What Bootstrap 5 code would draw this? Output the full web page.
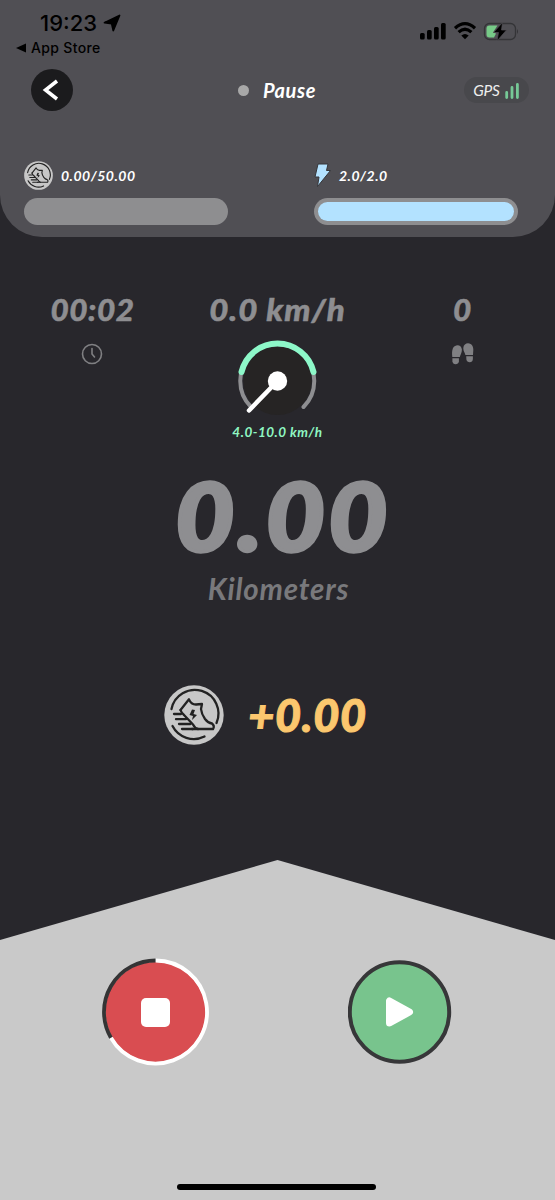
<!DOCTYPE html>
<html lang="en">
<head>
<meta charset="utf-8">
<meta name="viewport" content="width=device-width, initial-scale=1">
<title>Run – Pause</title>
<link href="https://cdn.jsdelivr.net/npm/bootstrap@5.3.0/dist/css/bootstrap.min.css" rel="stylesheet">
<style>
  body { background:#28272c; font-family:Lato,"Open Sans",sans-serif; font-style:italic; font-weight:700; color:#8e8e91; }
  .phone { width:555px; height:1200px; }
  .top-panel { height:237px; background:#504f54; border-radius:0 0 42px 42px; color:#fff; }
  .status { height:60px; font-family:Inter,sans-serif; font-style:normal; color:#000; padding:10px 36px 0 16px; }
  .clock { font-size:22px; line-height:26px; font-weight:500; padding-left:24px; gap:6px; }
  .return-link { font-size:14px; line-height:24px; font-weight:500; letter-spacing:.35px; }
  .signals { padding-top:11px; }
  .title-bar { height:60px; padding:0 26px 0 31px; }
  .back { width:42px; height:42px; background:#1b1b1d; border:0; padding-right:2px; }
  .state { font-size:20px; line-height:24px; letter-spacing:.6px; margin-left:17px; }
  .dot { width:11px; height:11px; margin-right:14px; background:#a8a8a8; }
  .gps { width:65px; height:26px; background:#48484c; font-size:15.5px; font-weight:400; letter-spacing:-.2px; color:#eee; padding-top:1px; }
  .meters { padding:40px 37px 0 24px; }
  .meter { width:204px; }
  .meter-label { height:30px; font-size:14px; letter-spacing:.5px; }
  .meter-track { height:27px; margin-top:8px; background:#8e8e90; padding:4px; }
  .meter-track .progress-bar { background:#b3e2ff; border-radius:20px; }
  .stats { height:153px; padding-top:54px; }
  .stat-value { font-size:30px; line-height:36px; font-weight:900; letter-spacing:.5px; white-space:nowrap; -webkit-text-stroke:.5px #8e8e91; transform:scaleX(1.05); }
  .stat-value.speed { letter-spacing:.9px; transform:scaleX(1.1); }
  .stat-icon { margin-top:16px; }
  .gauge { margin-top:10px; }
  .range { font-size:13.5px; line-height:18px; color:#8ff6c2; letter-spacing:.5px; }
  .distance { font-size:92.5px; line-height:100px; font-weight:900; padding-top:76px; letter-spacing:3.2px; -webkit-text-stroke:3.5px #8e8e91; }
  .distance span { display:inline-block; transform:translateX(5px) scaleX(1.1); }
  .unit { font-size:29.5px; line-height:36px; color:#79797c; margin-top:5px; padding-left:2px; letter-spacing:.8px; }
  .reward { height:60px; margin-top:78px; gap:24px; padding-right:24px; }
  .reward-value { font-size:45px; font-weight:900; line-height:58px; color:#fbc76e; letter-spacing:.7px; -webkit-text-stroke:1px #fbc76e; }
  .dock { height:340px; background:#c9c9c9; clip-path:polygon(0 80px,50% 0,100% 80px,100% 100%,0 100%); padding:98px 103px 0 101px; }
  .home { width:199px; height:6px; background:#000; margin:118px auto 0; }
  button { padding:0; }
  svg { display:block; flex:none; }
</style>
</head>
<body>
<svg width="0" height="0" class="position-absolute">
  <symbol id="coin" viewBox="0 0 60 60">
    <circle cx="30" cy="30" r="29.7" fill="#c7c7c7"/>
    <g fill="none" stroke="#222" stroke-width="2.3" stroke-linecap="round" stroke-linejoin="round">
      <path d="M7.500 24A23.700 23.700 0 1 1 52.500 38M8.500 41A24 24 0 0 0 40.500 51.500"/>
      <path d="M16.500 25L25 14.300Q27 19.500 32 19.500L38 19L37 24Q37.500 29 41 34Q44 38 48 38.500Q51 41 49 44H28"/>
      <path d="M16.500 25Q17.500 28 20 30L29 39.500Q31 43.500 34 44"/>
      <path d="M10 29H17M12 34.200H22M15 39H26.500M18 44H29"/>
    </g>
    <path d="M28 24.500L25.500 30L29 31L28 35L33 30L29.500 29L31 25Z" fill="#222"/>
  </symbol>
</svg>
<main class="phone d-flex flex-column mx-auto overflow-hidden">
  <header class="top-panel flex-shrink-0">
    <div class="status d-flex justify-content-between">
      <div>
        <div class="clock d-flex align-items-center"><span>19:23</span>
          <svg width="18" height="18" viewBox="0 0 18 18"><path d="M1.500 8.700L16.500 1.500L10.300 16.500L8.700 9.500Z" stroke="#000" stroke-width="1.800" stroke-linejoin="round"/></svg>
        </div>
        <div class="return-link d-flex align-items-center"><svg width="15" height="10" viewBox="0 0 15 10"><path d="M0 5L10 .5V9.500Z"/></svg>App Store</div>
      </div>
      <div class="signals d-flex align-items-start">
        <svg width="99" height="21" viewBox="0 0 99 21">
          <rect x="0" y="12" width="4.700" height="6.500" rx="1.500"/><rect x="7" y="9" width="4.700" height="9.500" rx="1.500"/><rect x="14" y="6" width="4.700" height="12.500" rx="1.500"/><rect x="21" y="2" width="4.700" height="16.500" rx="1.500"/>
          <g fill="none" stroke="#000" stroke-width="3.200"><path d="M35 7.200Q45 -2 55 7.200M38.600 11.200Q45 5.200 51.400 11.200"/></g><path d="M41.300 14.600Q45 11.500 48.700 14.600L45 18.300Z"/>
          <rect x="64.500" y="2.500" width="31" height="16" rx="5" fill="none" stroke="#343437" stroke-width="1.300"/>
          <path d="M69.500 4.500H77.500L73 11.500L76 12.500L74 16.500H69.500Q66.500 16.500 66.500 13.500V7.500Q66.500 4.500 69.500 4.500Z" fill="#76ca87"/>
          <path d="M82.500 1.500L73.500 11.500H78.500L77 20L86.500 9H81.500Z" stroke="#504f54" stroke-width=".7"/>
          <path d="M97 8Q99 10.500 97 13Z" fill="#343437"/>
        </svg>
      </div>
    </div>
    <div class="title-bar d-flex align-items-center justify-content-between">
      <button class="back rounded-circle d-flex align-items-center justify-content-center" aria-label="Back"><svg width="18" height="22" viewBox="0 0 18 22"><path d="M15 2L3.500 11L15 20" fill="none" stroke="#fff" stroke-width="3.500"/></svg></button>
      <div class="state d-flex align-items-center"><span class="dot rounded-circle"></span>Pause</div>
      <div class="gps rounded-pill d-flex align-items-center justify-content-center gap-1"><span>GPS</span><svg width="16" height="18" viewBox="0 0 16 18" stroke="#76c896" stroke-width="2.800" stroke-linecap="round"><path d="M2.700 10.500V15.500M8 5.500V15.500M13.400 2.500V15.500"/></svg></div>
    </div>
    <div class="meters d-flex justify-content-between">
      <div class="meter">
        <div class="meter-label d-flex align-items-center gap-2"><svg width="29" height="29"><use href="#coin"/></svg>0.00/50.00</div>
        <div class="progress rounded-pill meter-track"></div>
      </div>
      <div class="meter">
        <div class="meter-label d-flex align-items-center gap-2"><svg width="17" height="26" viewBox="0 0 17 26"><path d="M4 2H14L12.500 8.500H16.500L3.500 24.500L5 15H1Z" fill="#b3e2ff" stroke="#353539" stroke-width="1"/></svg>2.0/2.0</div>
        <div class="progress rounded-pill meter-track"><div class="progress-bar w-100"></div></div>
      </div>
    </div>
  </header>

  <section class="stats row g-0 text-center flex-shrink-0">
    <div class="col-4"><div class="stat-value">00:02</div>
      <svg class="stat-icon mx-auto" width="23" height="22" viewBox="0 0 23 22" fill="none" stroke="#808083" stroke-width="1.600" stroke-linecap="round"><circle cx="11" cy="11" r="9.500"/><path d="M11 5.500V11L13.500 14"/></svg>
    </div>
    <div class="col-4"><div class="stat-value speed">0.0 km/h</div>
      <svg class="gauge mx-auto" width="87" height="86" viewBox="0 0 87 86" fill="none" stroke-linecap="round">
        <circle cx="43.500" cy="44" r="34" fill="#262424"/>
        <path d="M17 70A37 37 0 1 1 69.500 70" stroke="#8e8e91" stroke-width="4"/>
        <path d="M7.500 35A37 37 0 0 1 79.500 35" stroke="#8df8c9" stroke-width="6"/>
        <path d="M43.500 44L15 73.500" stroke="#fff" stroke-width="4.500"/><circle cx="43.500" cy="44" r="9.700" fill="#fff"/>
      </svg>
      <div class="range">4.0-10.0 km/h</div>
    </div>
    <div class="col-4"><div class="stat-value">0</div>
      <svg class="stat-icon mx-auto" width="24" height="22" viewBox="0 0 24 22" fill="#808083">
        <path d="M1.300 14C1 10.500 .8 8 2 5C4.500 .8 10.500 1.500 10.900 6.500C11 9.500 9.200 12 8.800 14Z"/><path d="M1.400 15.200H7.900V18.500Q7.300 21.300 4.600 21.300Q1.800 21.300 1.400 18.300Z"/>
        <path d="M14.400 12C13.800 9.500 12.200 8 12.300 5C12.800 -.8 19.500 -1 21.500 3C23 6 22 9 22 12Z"/><path d="M15.200 13.200H21.900V16Q21.500 19.300 18.700 19.300Q16 19.300 15.400 16.500Z"/>
      </svg>
    </div>
  </section>

  <section class="text-center flex-shrink-0">
    <div class="distance"><span>0.00</span></div>
    <div class="unit">Kilometers</div>
  </section>

  <div class="reward d-flex align-items-center justify-content-center flex-shrink-0">
    <svg width="60" height="60"><use href="#coin"/></svg><span class="reward-value">+0.00</span>
  </div>

  <footer class="dock mt-auto flex-shrink-0">
    <div class="d-flex justify-content-between align-items-center">
      <button class="border-0 bg-transparent" aria-label="Stop"><svg width="108" height="108" viewBox="0 0 108 108">
        <circle cx="54.500" cy="54" r="50" fill="#d94d51"/>
        <g fill="none" stroke-width="3.800"><path d="M54.500 2.500A51.500 51.500 0 1 1 9.900 79.750" stroke="#fff"/><path d="M9.900 79.750A51.500 51.500 0 0 1 54.500 2.500" stroke="#343435"/></g>
        <rect x="40" y="40" width="29" height="29" rx="5" fill="#fff"/></svg></button>
      <button class="border-0 bg-transparent" aria-label="Resume"><svg width="104" height="104" viewBox="0 0 104 104">
        <circle cx="51.500" cy="52" r="49.700" fill="#78c48d" stroke="#373739" stroke-width="4"/>
        <path d="M41.500 41V63L61.500 52Z" fill="#fff" stroke="#fff" stroke-width="7" stroke-linejoin="round"/></svg></button>
    </div>
    <div class="home rounded-pill"></div>
  </footer>
</main>
<script src="https://cdn.jsdelivr.net/npm/bootstrap@5.3.0/dist/js/bootstrap.bundle.min.js"></script>
</body>
</html>
